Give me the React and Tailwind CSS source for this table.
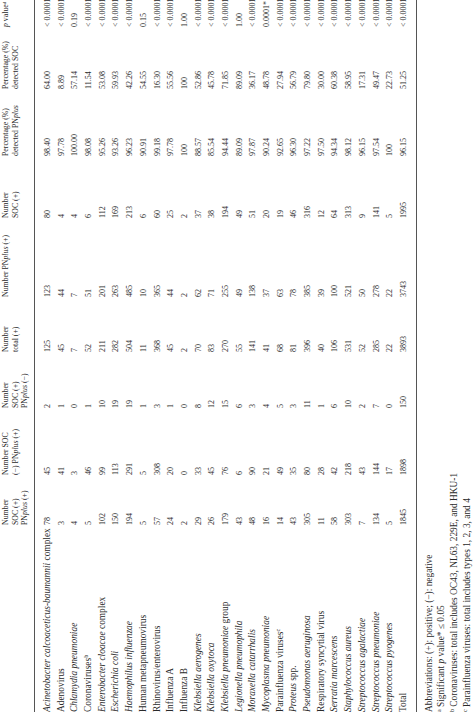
import React from "react";

const cols =
  "grid grid-cols-[187px_50px_67px_56px_55px_79px_62px_67px_62px_1fr] whitespace-nowrap";

const PN = () => (
  <>
    PN<i>plus</i>
  </>
);

const rows = [
  { l: <><i>Acinetobacter calcoaceticus-baumannii</i> complex</>, v: ["78", "45", "2", "125", "123", "80", "98.40", "64.00", "< 0.0001*"] },
  { l: <>Adenovirus</>, v: ["3", "41", "1", "45", "44", "4", "97.78", "8.89", "< 0.0001*"] },
  { l: <i>Chlamydia pneumoniae</i>, v: ["4", "3", "0", "7", "7", "4", "100.00", "57.14", "0.19"] },
  { l: <>Coronaviruses<sup className="text-[6px]">b</sup></>, v: ["5", "46", "1", "52", "51", "6", "98.08", "11.54", "< 0.0001*"] },
  { l: <><i>Enterobacter cloacae</i> complex</>, v: ["102", "99", "10", "211", "201", "112", "95.26", "53.08", "< 0.0001*"] },
  { l: <i>Escherichia coli</i>, v: ["150", "113", "19", "282", "263", "169", "93.26", "59.93", "< 0.0001*"] },
  { l: <i>Haemophilus influenzae</i>, v: ["194", "291", "19", "504", "485", "213", "96.23", "42.26", "< 0.0001*"] },
  { l: <>Human metapneumovirus</>, v: ["5", "5", "1", "11", "10", "6", "90.91", "54.55", "0.15"] },
  { l: <>Rhinovirus/enterovirus</>, v: ["57", "308", "3", "368", "365", "60", "99.18", "16.30", "< 0.0001*"] },
  { l: <>Influenza A</>, v: ["24", "20", "1", "45", "44", "25", "97.78", "55.56", "< 0.0001*"] },
  { l: <>Influenza B</>, v: ["2", "0", "0", "2", "2", "2", "100", "100", "1.00"] },
  { l: <i>Klebsiella aerogenes</i>, v: ["29", "33", "8", "70", "62", "37", "88.57", "52.86", "< 0.0001*"] },
  { l: <i>Klebsiella oxytoca</i>, v: ["26", "45", "12", "83", "71", "38", "85.54", "45.78", "< 0.0001*"] },
  { l: <><i>Klebsiella pneumoniae</i> group</>, v: ["179", "76", "15", "270", "255", "194", "94.44", "71.85", "< 0.0001*"] },
  { l: <i>Legionella pneumophila</i>, v: ["43", "6", "6", "55", "49", "49", "89.09", "89.09", "1.00"] },
  { l: <i>Moraxella catarrhalis</i>, v: ["48", "90", "3", "141", "138", "51", "97.87", "36.17", "< 0.0001*"] },
  { l: <i>Mycoplasma pneumoniae</i>, v: ["16", "21", "4", "41", "37", "20", "90.24", "48.78", "0.0001*"] },
  { l: <>Parainfluenza viruses<sup className="text-[6px]">c</sup></>, v: ["14", "49", "5", "68", "63", "19", "92.65", "27.94", "< 0.0001*"] },
  { l: <><i>Proteus</i> spp.</>, v: ["43", "35", "3", "81", "78", "46", "96.30", "56.79", "< 0.0001*"] },
  { l: <i>Pseudomonas aeruginosa</i>, v: ["305", "80", "11", "396", "385", "316", "97.22", "79.80", "< 0.0001*"] },
  { l: <>Respiratory syncytial virus</>, v: ["11", "28", "1", "40", "39", "12", "97.50", "30.00", "< 0.0001*"] },
  { l: <i>Serratia marcescens</i>, v: ["58", "42", "6", "106", "100", "64", "94.34", "60.38", "< 0.0001*"] },
  { l: <i>Staphylococcus aureus</i>, v: ["303", "218", "10", "531", "521", "313", "98.12", "58.95", "< 0.0001*"] },
  { l: <i>Streptococcus agalactiae</i>, v: ["7", "43", "2", "52", "50", "9", "96.15", "17.31", "< 0.0001*"] },
  { l: <i>Streptococcus pneumoniae</i>, v: ["134", "144", "7", "285", "278", "141", "97.54", "49.47", "< 0.0001"] },
  { l: <i>Streptococcus pyogenes</i>, v: ["5", "17", "0", "22", "22", "5", "100", "22.73", "< 0.0001"] },
  { l: <>Total</>, v: ["1845", "1898", "150", "3893", "3743", "1995", "96.15", "51.25", "< 0.0001"] },
];

export default function App() {
  return (
    <div className="relative w-[474px] h-[712px] overflow-hidden bg-white">
      <div className="absolute left-0 top-[712px] w-[712px] h-[474px] origin-top-left -rotate-90 font-['Liberation_Serif',serif] text-[9.4px] text-[#2a2a2a]">
        {/* header */}
        <div className={cols + " h-[35px] pt-[1px] text-[7.8px] leading-[9.5px] border-b border-[#555]"}>
          <div></div>
          <div>Number<br />SOC (+)<br /><PN /> (+)</div>
          <div>Number SOC<br />(−) <PN /> (+)</div>
          <div>Number<br />SOC (+)<br /><PN /> (−)</div>
          <div>Number<br />total (+)</div>
          <div>Number <PN /> (+)</div>
          <div>Number<br />SOC (+)</div>
          <div>Percentage (%)<br />detected <PN /></div>
          <div>Percentage (%)<br />detected SOC</div>
          <div><i>p</i> value<sup className="text-[5px]">d</sup></div>
        </div>
        {/* body */}
        <div className="pt-[6px] pb-[5px] border-b border-[#555]">
          {rows.map((r, i) => (
            <div key={i} className={cols + " h-[13.7px] leading-[13.7px]"}>
              <div>{r.l}</div>
              {r.v.map((x, j) => (
                <div key={j} className="text-[8px]">{x}</div>
              ))}
            </div>
          ))}
        </div>
        {/* footnotes */}
        <div className="pt-[6px] leading-[12.7px] whitespace-nowrap">
          <div>Abbreviations: (+): positive; (−): negative</div>
          <div><sup className="text-[6px]">a</sup> Significant <i>p</i> value* ≤ 0.05</div>
          <div><sup className="text-[6px]">b</sup> Coronaviruses: total includes OC43, NL63, 229E, and HKU-1</div>
          <div><sup className="text-[6px]">c</sup> Parainfluenza viruses: total includes types 1, 2, 3, and 4</div>
        </div>
      </div>
    </div>
  );
}
